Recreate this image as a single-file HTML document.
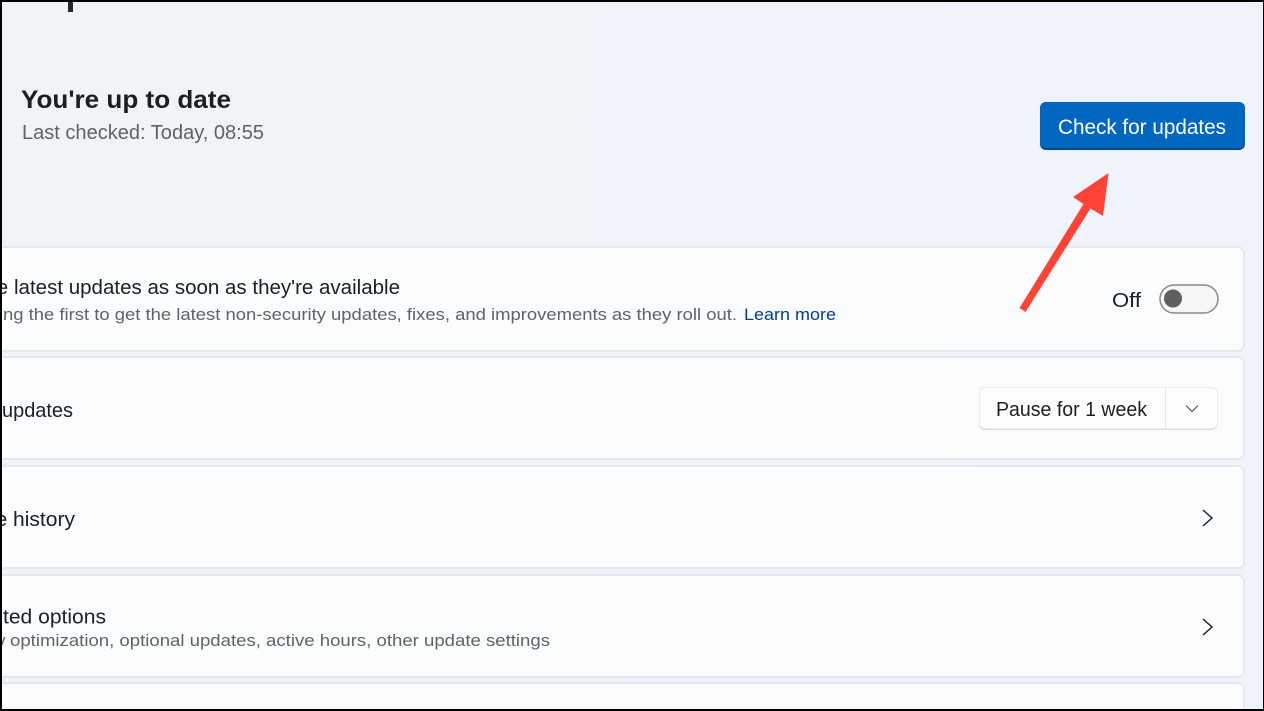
<!DOCTYPE html>
<html><head><meta charset="utf-8"><style>
html,body{margin:0;padding:0;width:1264px;height:711px;overflow:hidden;background:#eff4f9}
svg{display:block}
text{font-family:"Liberation Sans",sans-serif}
</style></head><body>
<svg width="1264" height="711" viewBox="0 0 1264 711" xmlns="http://www.w3.org/2000/svg">
<defs><linearGradient id="bg" x1="0" y1="0" x2="1" y2="0"><stop offset="0" stop-color="#eff4f9"/><stop offset="0.4" stop-color="#eff4f9"/><stop offset="0.85" stop-color="#eff3fb"/><stop offset="1" stop-color="#eff3fb"/></linearGradient></defs>
<rect width="1264" height="711" fill="url(#bg)"/>
<rect x="68" y="2" width="5" height="10" fill="#22272b"/>

<text x="21" y="108" font-size="25" font-weight="700" fill="#1b1f22" textLength="210" lengthAdjust="spacingAndGlyphs">You're up to date</text>
<text x="22" y="139" font-size="20" fill="#5f6367" textLength="242" lengthAdjust="spacingAndGlyphs">Last checked: Today, 08:55</text>

<rect x="1040" y="102" width="205" height="48" rx="6" fill="#004a8f"/>
<rect x="1040" y="102" width="205" height="46" rx="6" fill="#0067c0"/>
<text x="1058" y="134" font-size="21" fill="#fff" textLength="168" lengthAdjust="spacingAndGlyphs">Check for updates</text>

<g fill="#fbfcfd" stroke="#e5e9ee" stroke-width="2">
<rect x="-20" y="247" width="1264" height="104" rx="6"/>
<rect x="-20" y="357" width="1264" height="102" rx="6"/>
<rect x="-20" y="466" width="1264" height="102" rx="6"/>
<rect x="-20" y="575" width="1264" height="102" rx="6"/>
<rect x="-20" y="683" width="1264" height="60" rx="6"/>
</g>

<text x="-3" y="294" font-size="20" fill="#1b1f22">e</text>
<text x="14" y="294" font-size="20" fill="#1b1f22" textLength="386" lengthAdjust="spacingAndGlyphs">latest updates as soon as they're available</text>
<text x="3" y="320" font-size="17" fill="#5f6367" textLength="734" lengthAdjust="spacingAndGlyphs">ng the first to get the latest non-security updates, fixes, and improvements as they roll out.</text>
<text x="744" y="320" font-size="17" fill="#003e92" textLength="92" lengthAdjust="spacingAndGlyphs">Learn more</text>
<text x="1112" y="307" font-size="20" fill="#1b1f22" textLength="29" lengthAdjust="spacingAndGlyphs">Off</text>
<rect x="1160" y="285" width="58" height="28" rx="14" fill="#f6f6f7" stroke="#8a8a8a" stroke-width="1.5"/>
<circle cx="1173" cy="298.500" r="9" fill="#5f5f5f"/>

<text x="2" y="417" font-size="20" fill="#1b1f22" textLength="71" lengthAdjust="spacingAndGlyphs">updates</text>
<rect x="979" y="387" width="239" height="43" rx="6" fill="#dcdfe2"/>
<rect x="979.5" y="387.500" width="238" height="41" rx="6" fill="#fdfdfe" stroke="#eceef0"/>
<rect x="1165" y="387" width="1" height="42" fill="#e3e5e8"/>
<text x="996" y="416" font-size="20" fill="#1b1f22" textLength="151" lengthAdjust="spacingAndGlyphs">Pause for 1 week</text>
<path d="M1186 405.500L1192 411.500L1198 405.500" fill="none" stroke="#55585b" stroke-width="1.200"/>

<text x="-4" y="526" font-size="20" fill="#1b1f22">e</text>
<text x="13" y="526" font-size="20" fill="#1b1f22" textLength="62" lengthAdjust="spacingAndGlyphs">history</text>
<path d="M1203 510L1212 518L1203 526" fill="none" stroke="#1f2326" stroke-width="1.500"/>

<text x="3" y="623.500" font-size="20" fill="#1b1f22" textLength="103" lengthAdjust="spacingAndGlyphs">ted options</text>
<text x="-3" y="646" font-size="17" fill="#5f6367">y</text>
<text x="10" y="646" font-size="17" fill="#5f6367" textLength="540" lengthAdjust="spacingAndGlyphs">optimization, optional updates, active hours, other update settings</text>
<path d="M1203 619L1212 627L1203 635" fill="none" stroke="#1f2326" stroke-width="1.500"/>

<path d="M1108.500 173L1073 197L1083.500 204L1019.500 308L1025.500 312L1090.500 208.500L1103 216Z" fill="#ff4436"/>

<rect x="0" y="0" width="1264" height="2" fill="#000"/>
<rect x="0" y="0" width="2" height="711" fill="#000"/>
<rect x="0" y="709" width="1264" height="2" fill="#000"/>
<rect x="1263" y="0" width="1" height="711" fill="#000"/>
</svg>
</body></html>
